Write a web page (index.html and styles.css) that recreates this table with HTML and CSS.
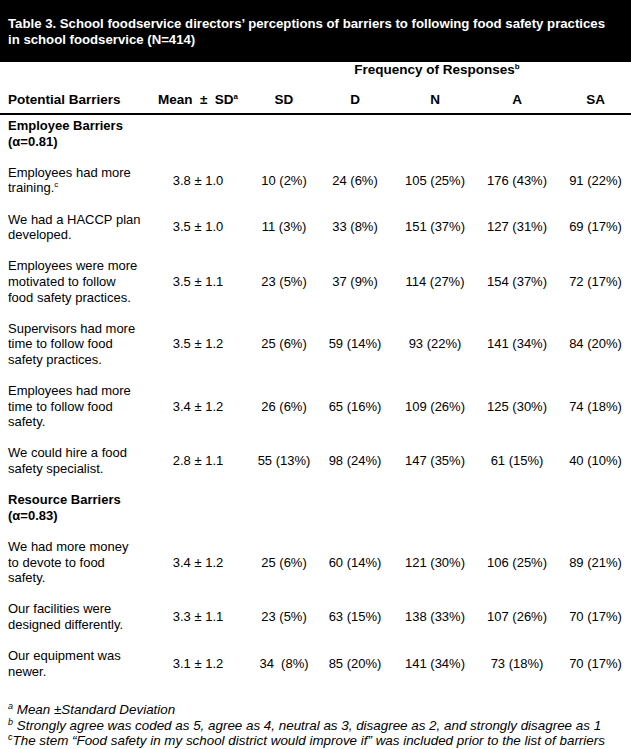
FILE: index.html
```html
<!DOCTYPE html>
<html lang="en">
<head>
  <meta charset="UTF-8" />
  <title>Table 3</title>
  <link rel="stylesheet" href="styles.css">
</head>
<body>
  <div class="title">
    Table 3. School foodservice directors’ perceptions of barriers to following food safety practices<br>
    in school foodservice (N=414)
  </div>

  <table class="barriers">
    <colgroup>
      <col class="c-label">
      <col class="c-mean">
      <col class="c-sd">
      <col class="c-d">
      <col class="c-n">
      <col class="c-a">
      <col class="c-sa">
    </colgroup>
    <thead>
      <tr class="freq-row">
        <th></th>
        <th></th>
        <th></th>
        <th colspan="3" class="freq">Frequency of Responses<sup>b</sup></th>
        <th></th>
      </tr>
      <tr class="head-row">
        <th class="label">Potential Barriers</th>
        <th>Mean &nbsp;± &nbsp;SD<sup>a</sup></th>
        <th>SD</th>
        <th>D</th>
        <th>N</th>
        <th>A</th>
        <th class="sa">SA</th>
      </tr>
    </thead>
    <tbody>
      <tr class="group first">
        <td class="label" colspan="7">Employee Barriers<br>(α=0.81)</td>
      </tr>
      <tr>
        <td class="label">Employees had more training.<sup>c</sup></td>
        <td>3.8 ± 1.0</td><td>10 (2%)</td><td>24 (6%)</td><td>105 (25%)</td><td>176 (43%)</td><td class="sa">91 (22%)</td>
      </tr>
      <tr>
        <td class="label">We had a HACCP plan developed.</td>
        <td>3.5 ± 1.0</td><td>11 (3%)</td><td>33 (8%)</td><td>151 (37%)</td><td>127 (31%)</td><td class="sa">69 (17%)</td>
      </tr>
      <tr>
        <td class="label">Employees were more motivated to follow food safety practices.</td>
        <td>3.5 ± 1.1</td><td>23 (5%)</td><td>37 (9%)</td><td>114 (27%)</td><td>154 (37%)</td><td class="sa">72 (17%)</td>
      </tr>
      <tr>
        <td class="label">Supervisors had more time to follow food safety practices.</td>
        <td>3.5 ± 1.2</td><td>25 (6%)</td><td>59 (14%)</td><td>93 (22%)</td><td>141 (34%)</td><td class="sa">84 (20%)</td>
      </tr>
      <tr>
        <td class="label">Employees had more time to follow food safety.</td>
        <td>3.4 ± 1.2</td><td>26 (6%)</td><td>65 (16%)</td><td>109 (26%)</td><td>125 (30%)</td><td class="sa">74 (18%)</td>
      </tr>
      <tr>
        <td class="label">We could hire a food safety specialist.</td>
        <td>2.8 ± 1.1</td><td>55 (13%)</td><td>98 (24%)</td><td>147 (35%)</td><td>61 (15%)</td><td class="sa">40 (10%)</td>
      </tr>
      <tr class="group">
        <td class="label" colspan="7">Resource Barriers<br>(α=0.83)</td>
      </tr>
      <tr>
        <td class="label">We had more money to devote to food safety.</td>
        <td>3.4 ± 1.2</td><td>25 (6%)</td><td>60 (14%)</td><td>121 (30%)</td><td>106 (25%)</td><td class="sa">89 (21%)</td>
      </tr>
      <tr>
        <td class="label">Our facilities were designed differently.</td>
        <td>3.3 ± 1.1</td><td>23 (5%)</td><td>63 (15%)</td><td>138 (33%)</td><td>107 (26%)</td><td class="sa">70 (17%)</td>
      </tr>
      <tr>
        <td class="label">Our equipment was newer.</td>
        <td>3.1 ± 1.2</td><td>34 &nbsp;(8%)</td><td>85 (20%)</td><td>141 (34%)</td><td>73 (18%)</td><td class="sa">70 (17%)</td>
      </tr>
    </tbody>
  </table>

  <div class="notes">
    <div><sup>a</sup> Mean ±Standard Deviation</div>
    <div><sup>b</sup> Strongly agree was coded as 5, agree as 4, neutral as 3, disagree as 2, and strongly disagree as 1</div>
    <div><sup>c</sup>The stem “Food safety in my school district would improve if” was included prior to the list of barriers</div>
  </div>
</body>
</html>
```

FILE: styles.css
```css
body {
  margin: 0;
  background: #fff;
  color: #000;
  font-family: "Liberation Sans", Arial, sans-serif;
  font-size: 13px;
}
.title {
  background: #000;
  color: #fff;
  font-weight: bold;
  font-size: 13.2px;
  line-height: 16px;
  padding: 16px 8px 14px;
}
.barriers {
  width: 631px;
  border-collapse: collapse;
  table-layout: fixed;
}
.c-label { width: 142px; }
.c-mean { width: 112px; }
.c-sd { width: 60px; }
.c-d { width: 82px; }
.c-n { width: 78px; }
.c-a { width: 86px; }
.c-sa { width: 71px; }

.barriers th {
  font-weight: bold;
  font-size: 13.5px;
  line-height: 16px;
  text-align: center;
  padding: 0;
  white-space: nowrap;
}
.barriers th.label {
  text-align: left;
  padding-left: 8px;
}
.freq-row th {
  height: 16px;
}
.head-row th {
  padding: 14px 0 5px;
  border-bottom: 2px solid #000;
}
.barriers td {
  text-align: center;
  vertical-align: middle;
  line-height: 15.6px;
  padding: 7.8px 0;
  white-space: nowrap;
}
.barriers td.label {
  text-align: left;
  padding-left: 8px;
  white-space: normal;
}
.group td.label {
  font-weight: bold;
}
.group.first td {
  padding-top: 3px;
}
sup {
  font-size: 8px;
  line-height: 0;
  vertical-align: 5px;
}
.notes {
  margin-top: 15px;
  padding-left: 8px;
  font-style: italic;
  font-size: 13.4px;
  line-height: 15.5px;
}
.notes sup {
  font-size: 9px;
}
```
